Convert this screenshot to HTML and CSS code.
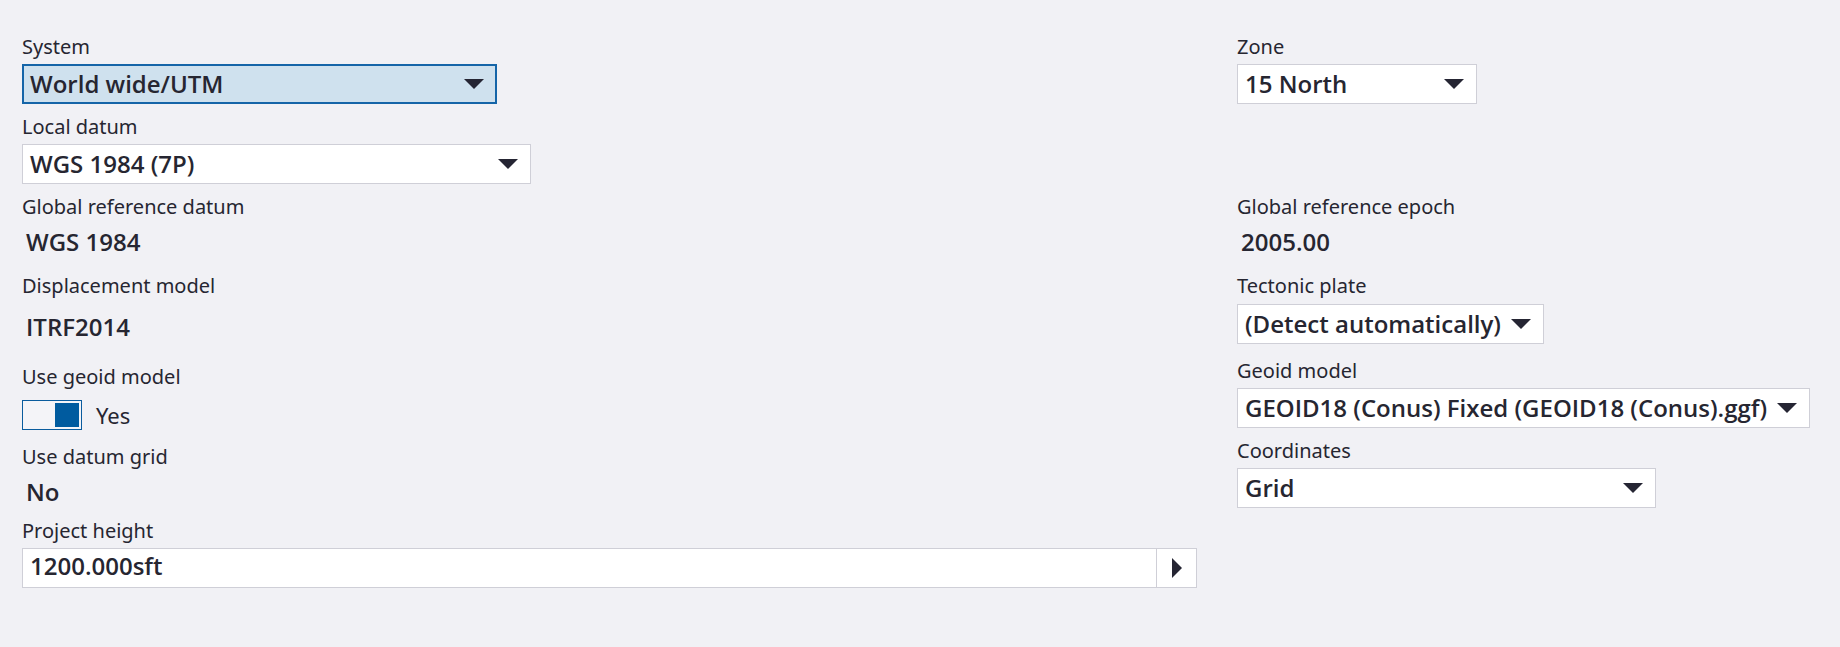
FILE: index.html
```html
<!DOCTYPE html>
<html lang="en">
<head>
<meta charset="utf-8">
<title>Coordinate system</title>
<link rel="stylesheet" href="styles.css">
</head>
<body>
<div class="page">
  <div class="col">
    <div class="label">System</div>
    <div class="select select-active w-system"><span class="select-text">World wide/UTM</span><span class="caret"></span></div>

    <div class="label mt-11">Local datum</div>
    <div class="select w-local"><span class="select-text">WGS 1984 (7P)</span><span class="caret"></span></div>

    <div class="label mt-11">Global reference datum</div>
    <div class="value">WGS 1984</div>

    <div class="label mt-16">Displacement model</div>
    <div class="value value-low">ITRF2014</div>

    <div class="label mt-22">Use geoid model</div>
    <div class="toggle-row">
      <div class="toggle"><span class="knob"></span></div>
      <span class="toggle-text">Yes</span>
    </div>

    <div class="label mt-15">Use datum grid</div>
    <div class="value">No</div>

    <div class="label mt-11">Project height</div>
    <div class="input">
      <span class="input-text">1200.000sft</span>
      <span class="input-btn"><span class="caret-right"></span></span>
    </div>
  </div>

  <div class="col">
    <div class="label">Zone</div>
    <div class="select w-zone"><span class="select-text">15 North</span><span class="caret"></span></div>

    <div class="label mt-91">Global reference epoch</div>
    <div class="value">2005.00</div>

    <div class="label mt-16">Tectonic plate</div>
    <div class="select select-auto mt-6"><span class="select-text">(Detect automatically)</span><span class="caret"></span></div>

    <div class="label mt-15">Geoid model</div>
    <div class="select select-auto"><span class="select-text">GEOID18 (Conus) Fixed (GEOID18 (Conus).ggf)</span><span class="caret"></span></div>

    <div class="label mt-11">Coordinates</div>
    <div class="select w-coords"><span class="select-text">Grid</span><span class="caret"></span></div>
  </div>
</div>
</body>
</html>
```

FILE: styles.css
```css
html, body {
  margin: 0;
  padding: 0;
  background: #f1f1f5;
}

body {
  font-family: "Noto Sans", "Open Sans", sans-serif;
  color: #262631;
}

.page {
  display: grid;
  grid-template-columns: 1175px auto;
  column-gap: 40px;
  padding: 35px 0 0 22px;
  align-items: start;
}

.col {
  display: flex;
  flex-direction: column;
  align-items: flex-start;
}

.label {
  font-size: 20px;
  line-height: 24px;
  font-weight: 400;
  white-space: nowrap;
}

.mt-11 { margin-top: 11px; }
.mt-15 { margin-top: 15px; }
.mt-16 { margin-top: 16px; }
.mt-22 { margin-top: 22px; }
.mt-91 { margin-top: 91px; }

.select {
  box-sizing: border-box;
  height: 40px;
  margin-top: 5px;
  display: flex;
  align-items: center;
  justify-content: space-between;
  gap: 10px;
  padding: 0 12px 0 7px;
  background: #ffffff;
  border: 1px solid #cfcfd7;
  font-family: "Open Sans", "Noto Sans", sans-serif;
  font-size: 24px;
  line-height: 32px;
  font-weight: 600;
  white-space: nowrap;
}

.select.mt-6 { margin-top: 6px; }

.select-active {
  background: #cfe1ee;
  border: 2px solid #1565a8;
  padding: 0 11px 0 6px;
}

.w-system { width: 475px; }
.w-local { width: 509px; }
.w-zone { width: 240px; }
.w-coords { width: 419px; }

.caret {
  flex: none;
  width: 0;
  height: 0;
  border-left: 10px solid transparent;
  border-right: 10px solid transparent;
  border-top: 10px solid #252533;
}

.value {
  margin-top: 7px;
  padding-left: 4px;
  font-family: "Open Sans", "Noto Sans", sans-serif;
  font-size: 24px;
  line-height: 32px;
  font-weight: 600;
}

.value-low { margin-top: 13px; }

.toggle-row {
  margin-top: 11px;
  display: flex;
  align-items: center;
  gap: 14px;
}

.toggle {
  box-sizing: border-box;
  width: 60px;
  height: 30px;
  border: 1px solid #0a5c9e;
  background: #f4f4f8;
  display: flex;
  justify-content: flex-end;
  align-items: center;
  padding-right: 2px;
}

.knob {
  width: 24px;
  height: 24px;
  background: #005b9f;
}

.toggle-text {
  font-size: 22px;
  line-height: 30px;
}

.input {
  box-sizing: border-box;
  margin-top: 5px;
  width: 1175px;
  height: 40px;
  display: flex;
  background: #ffffff;
  border: 1px solid #cfcfd7;
}

.input-text {
  flex: 1;
  padding: 1px 0 0 7px;
  font-family: "Open Sans", "Noto Sans", sans-serif;
  font-size: 24px;
  line-height: 32px;
  font-weight: 600;
}

.input-btn {
  flex: none;
  width: 39px;
  border-left: 1px solid #cfcfd7;
  display: flex;
  align-items: center;
  justify-content: center;
}

.caret-right {
  width: 0;
  height: 0;
  border-top: 10px solid transparent;
  border-bottom: 10px solid transparent;
  border-left: 10px solid #252533;
}
```
